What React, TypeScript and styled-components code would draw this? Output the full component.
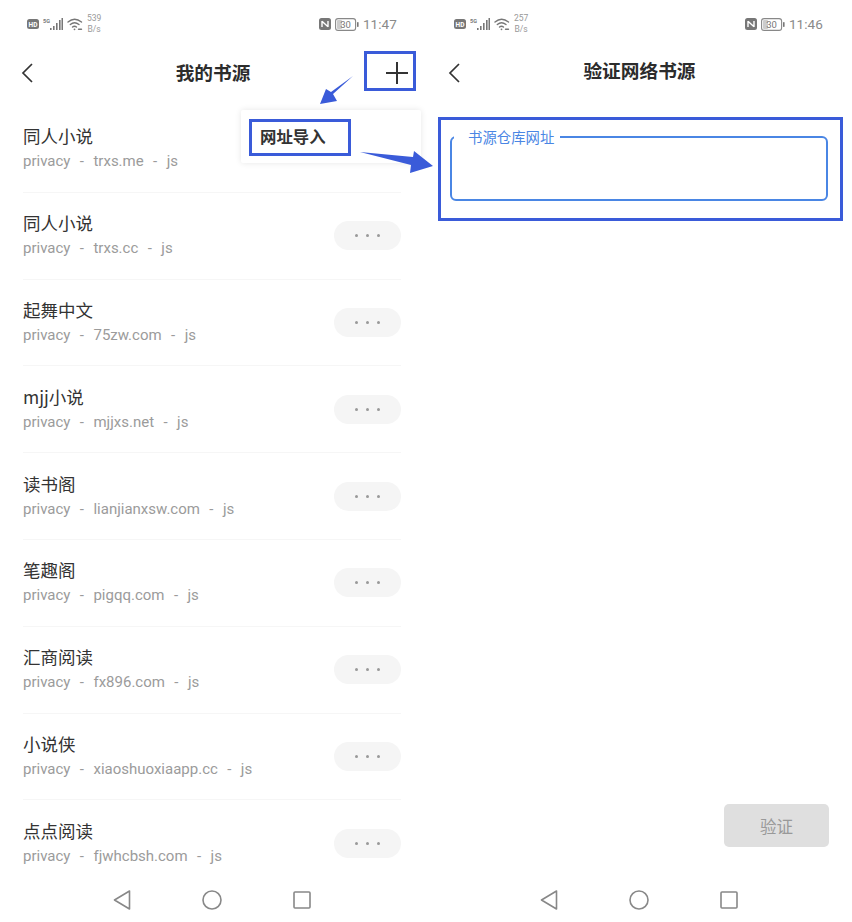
import React from 'react';
import styled, { createGlobalStyle } from 'styled-components';

const Global = createGlobalStyle`
  html, body { margin: 0; padding: 0; background: #fff; }
  body { font-family: Roboto, "Noto Sans CJK SC", sans-serif; width: 852px; height: 922px; overflow: hidden; }
  * { box-sizing: border-box; }
`;

const Page = styled.div`
  position: relative;
  display: flex;
  width: 852px;
  height: 922px;
  background: #fff;
`;
const Phone = styled.section<{ $pad: number }>`
  display: flex;
  flex-direction: column;
  width: 426px;
  height: 922px;
  padding-left: ${p => p.$pad}px;
`;
const Status = styled.div`
  display: flex;
  align-items: center;
  justify-content: space-between;
  height: 46px;
  padding: 2px 29px 0 27px;
  color: #8a8a8a;
`;
const StatusGroup = styled.div`
  display: flex;
  align-items: center;
  gap: 4px;
`;
const Speed = styled.div`
  display: flex;
  flex-direction: column;
  align-items: center;
  font-size: 8.5px;
  line-height: 11px;
  color: #999;
`;
const Clock = styled.span`
  font-size: 13.5px;
  letter-spacing: 0.1px;
  color: #8a8a8a;
`;
const Header = styled.header<{ $h: number }>`
  position: relative;
  display: flex;
  align-items: center;
  justify-content: center;
  height: ${p => p.$h}px;
  flex: none;
`;
const HeaderTitleBox = styled.div<{ $top: number }>`
  margin-top: ${p => p.$top}px;
`;
const Back = styled.svg`
  position: absolute;
  left: 21px;
  top: 16px;
`;
const Title = styled.h1`
  margin: 0;
  font-family: "Noto Sans CJK SC", sans-serif;
  font-size: 18.7px;
  font-weight: 700;
  color: #2c2c2c;
`;
const Plus = styled.svg`
  position: absolute;
  right: 17px;
  top: 15px;
`;
const List = styled.ul`
  flex: 1;
  list-style: none;
  margin: 0;
  padding: 0 25px 0 23px;
  overflow: hidden;
`;
const Row = styled.li`
  display: flex;
  align-items: center;
  justify-content: space-between;
  height: 86.8px;
  padding: 0 0 3px;
  border-bottom: 1px solid #f6f6f6;
  &:last-child { border-bottom: none; }
`;
const RowText = styled.div`
  display: flex;
  flex-direction: column;
  gap: 2px;
`;
const RowTitle = styled.div`
  font-family: "Noto Sans CJK SC", sans-serif;
  font-size: 17.5px;
  line-height: 26px;
  color: #333;
`;
const RowSub = styled.div`
  font-size: 15px;
  line-height: 20px;
  word-spacing: 1px;
  color: #9b9b9b;
  white-space: pre;
`;
const More = styled.div`
  display: flex;
  align-items: center;
  justify-content: center;
  gap: 8px;
  width: 67px;
  height: 29px;
  margin-top: 3px;
  border-radius: 15px;
  background: #f5f5f5;
`;
const Dot = styled.i`
  width: 3px;
  height: 3px;
  border-radius: 50%;
  background: #999;
`;
const Nav = styled.nav`
  display: flex;
  align-items: center;
  justify-content: center;
  gap: 71px;
  height: 44px;
  padding-right: 2px;
  flex: none;
`;
const Form = styled.main`
  flex: 1;
  display: flex;
  flex-direction: column;
  justify-content: space-between;
  padding: 32px 24px 0 23px;
`;
const Field = styled.fieldset`
  height: 73px;
  margin: 0;
  padding: 0 0 0 2px;
  border: 2px solid #4a86e4;
  border-radius: 6px;
`;
const FieldLabel = styled.legend`
  padding: 0 6px 0 14px;
  font-family: "Noto Sans CJK SC", sans-serif;
  font-size: 14.4px;
  line-height: 17px;
  color: #4a86e4;
`;
const Verify = styled.button`
  align-self: flex-end;
  width: 105px;
  height: 43px;
  margin: 0 -1px 31px 0;
  border: none;
  border-radius: 5px;
  background: #dfdfdf;
  color: #999;
  font-family: "Noto Sans CJK SC", sans-serif;
  font-size: 16.5px;
`;
const Popup = styled.div`
  position: absolute;
  left: 241px;
  top: 110px;
  width: 180px;
  height: 53px;
  padding: 14px 0 0 19px;
  background: #fff;
  border-radius: 2px;
  box-shadow: 0 0 6px rgba(0,0,0,.1);
  font-family: "Noto Sans CJK SC", sans-serif;
  font-size: 16.4px;
  font-weight: 700;
  line-height: 24px;
  color: #333;
`;
const Mark = styled.div<{ $x: number; $y: number; $w: number; $h: number }>`
  position: absolute;
  left: ${p => p.$x}px;
  top: ${p => p.$y}px;
  width: ${p => p.$w}px;
  height: ${p => p.$h}px;
  border: 3px solid #3a5bd9;
`;
const Arrows = styled.svg`
  position: absolute;
  left: 0;
  top: 0;
  pointer-events: none;
`;

const HD = () => (
  <svg width="12" height="10" viewBox="0 0 12 10">
    <rect width="12" height="10" rx="2.5" fill="#777" />
    <text x="6" y="7.5" textAnchor="middle" fontSize="6.5" fontWeight="700" fontFamily="Roboto" fill="#fff">HD</text>
  </svg>
);
const Signal = () => (
  <svg width="20" height="14" viewBox="0 0 20 14">
    <text x="0" y="5.5" fontSize="5.5" fontWeight="700" fontFamily="Roboto" fill="#777">5G</text>
    {[[7, 11, 2], [10, 9, 4], [13, 6, 7], [16, 3, 10], [18.5, 1, 12]].map(([x, y, h]) => (
      <rect key={x} x={x} y={y} width="1.6" height={h} fill="#777" />
    ))}
  </svg>
);
const Wifi = () => (
  <svg width="16" height="13" viewBox="0 0 16 13" fill="none" stroke="#777" strokeWidth="1.4" strokeLinecap="round">
    <path d="M1 4 Q7.5 -1.5 14.5 4" />
    <path d="M3.3 6.5 Q7.5 3 12 6.5" />
    <path d="M5.5 9 Q7.5 7.4 9.5 9" />
    <circle cx="7.5" cy="11.3" r="0.9" fill="#777" stroke="none" />
    <path d="M11.5 11.3h3" />
  </svg>
);
const NfcIcon = () => (
  <svg width="12" height="12" viewBox="0 0 12 12">
    <rect width="12" height="12" rx="2.5" fill="#777" />
    <path d="M3 3v6M3 3.3l6 5.4M9 3v6" stroke="#fff" strokeWidth="1.4" fill="none" />
  </svg>
);
const Battery = () => (
  <svg width="24" height="13" viewBox="0 0 24 13">
    <rect x="0.6" y="0.6" width="20" height="11.8" rx="2.5" fill="none" stroke="#888" strokeWidth="1.1" />
    <rect x="2" y="2" width="5" height="9" rx="1" fill="#ccc" />
    <text x="10.5" y="10" textAnchor="middle" fontSize="9.5" fontFamily="Roboto" fill="#777">30</text>
    <rect x="22" y="4" width="1.6" height="5" rx="0.7" fill="#777" />
  </svg>
);

const StatusBar = ({ speed, time }: { speed: string; time: string }) => (
  <Status>
    <StatusGroup>
      <HD />
      <Signal />
      <Wifi />
      <Speed><span>{speed}</span><span>B/s</span></Speed>
    </StatusGroup>
    <StatusGroup>
      <NfcIcon />
      <Battery />
      <Clock>{time}</Clock>
    </StatusGroup>
  </Status>
);

const BackIcon = () => (
  <Back width="13" height="22" viewBox="0 0 13 22" fill="none" stroke="#333" strokeWidth="1.7">
    <path d="M11 2 2 11l9 9" />
  </Back>
);

const NavBar = () => (
  <Nav>
    <svg width="18" height="20" viewBox="0 0 18 20" fill="none" stroke="#888" strokeWidth="1.6" strokeLinejoin="round">
      <path d="M16.5 1v18L1.5 10z" />
    </svg>
    <svg width="20" height="20" viewBox="0 0 20 20" fill="none" stroke="#888" strokeWidth="1.6">
      <circle cx="10" cy="10" r="9" />
    </svg>
    <svg width="18" height="18" viewBox="0 0 18 18" fill="none" stroke="#888" strokeWidth="1.6" strokeLinejoin="round">
      <rect x="1" y="1" width="16" height="16" rx="1" />
    </svg>
  </Nav>
);

const sources: [string, string, boolean][] = [
  ['同人小说', 'trxs.me', false],
  ['同人小说', 'trxs.cc', true],
  ['起舞中文', '75zw.com', true],
  ['mjj小说', 'mjjxs.net', true],
  ['读书阁', 'lianjianxsw.com', true],
  ['笔趣阁', 'pigqq.com', true],
  ['汇商阅读', 'fx896.com', true],
  ['小说侠', 'xiaoshuoxiaapp.cc', true],
  ['点点阅读', 'fjwhcbsh.com', true],
];

export default function App() {
  return (
    <Page>
      <Global />
      <Phone $pad={0}>
        <StatusBar speed="539" time="11:47" />
        <Header $h={60}>
          <BackIcon />
          <HeaderTitleBox $top={-9}><Title>我的书源</Title></HeaderTitleBox>
          <Plus width="24" height="24" viewBox="0 0 24 24" stroke="#333" strokeWidth="2">
            <path d="M1 12h22M12 1v22" />
          </Plus>
        </Header>
        <List>
          {sources.map(([name, host, more], i) => (
            <Row key={i}>
              <RowText>
                <RowTitle>{name}</RowTitle>
                <RowSub>{`privacy  -  ${host}  -  js`}</RowSub>
              </RowText>
              {more && <More><Dot /><Dot /><Dot /></More>}
            </Row>
          ))}
        </List>
        <NavBar />
      </Phone>
      <Phone $pad={1}>
        <StatusBar speed="257" time="11:46" />
        <Header $h={50}>
          <BackIcon />
          <HeaderTitleBox $top={-4}><Title>验证网络书源</Title></HeaderTitleBox>
        </Header>
        <Form>
          <Field>
            <FieldLabel>书源仓库网址</FieldLabel>
          </Field>
          <Verify>验证</Verify>
        </Form>
        <NavBar />
      </Phone>
      <Popup>网址导入</Popup>
      <Mark $x={364} $y={51} $w={52} $h={40} />
      <Mark $x={249} $y={119} $w={102} $h={37} />
      <Mark $x={438} $y={117} $w={405} $h={104} />
      <Arrows width="852" height="922" viewBox="0 0 852 922" fill="#3a5bd9">
        <path d="M353 76 333 94 337 101 320 104 326 89 331 92z" />
        <path d="M360 152 413 157 414 151 433 166 410 173 411 165z" />
      </Arrows>
    </Page>
  );
}
